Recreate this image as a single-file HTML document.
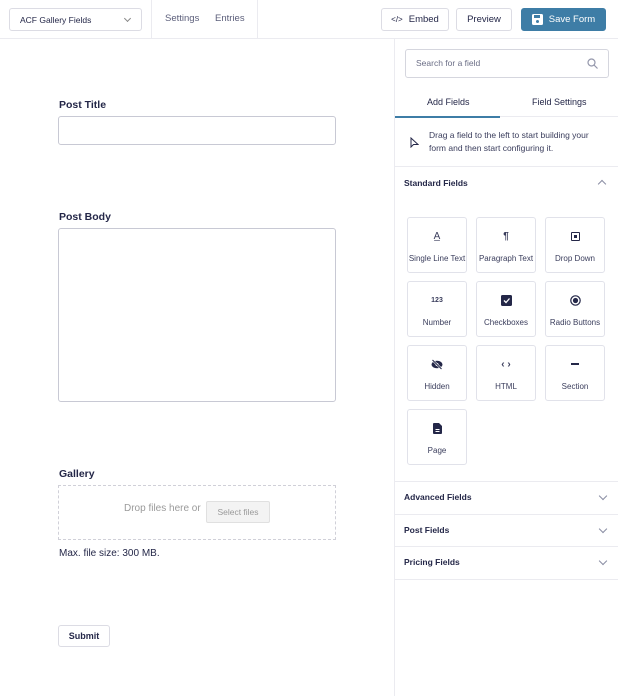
<!DOCTYPE html>
<html><head><style>
*{box-sizing:border-box;margin:0;padding:0}
body{width:618px;height:696px;background:#fff;font-family:"Liberation Sans",sans-serif;color:#242748;position:relative;overflow:hidden}
.a{position:absolute}
.btn{position:absolute;border:1px solid #dcdce4;border-radius:3px;background:#fff;font-size:9.5px;display:flex;align-items:center;justify-content:center;gap:6px;color:#242748}
.tile{position:absolute;width:60px;height:56px;border:1px solid #e1e2ea;border-radius:3px;font-size:8px;color:#3a3d5c;text-align:center}
.tile .ic{position:absolute;top:12px;left:0;right:0;height:12px;display:flex;justify-content:center;align-items:center}
.tile .lb{position:absolute;top:36px;left:0;right:0;white-space:nowrap}
.lbl{position:absolute;left:59px;font-size:10.5px;font-weight:bold;color:#242748}
.sec{position:absolute;left:395px;width:223px;height:33px;border-top:1px solid #ebebf0;font-size:8.5px;font-weight:bold;padding-left:9px;line-height:31px}
.chev{position:absolute;right:12px;top:11px;width:6px;height:6px;border-right:1.2px solid #8a8da3;border-bottom:1.2px solid #8a8da3;transform:rotate(45deg)}
</style></head><body>
<div class="a" style="left:0;top:38px;width:618px;border-top:1px solid #ebebf0"></div>
<div class="a" style="left:151px;top:0;height:38px;border-left:1px solid #ebebf0"></div>
<div class="a" style="left:257px;top:0;height:38px;border-left:1px solid #ebebf0"></div>
<div class="a" style="left:394px;top:38px;height:658px;border-left:1px solid #ebebf0"></div>
<div class="btn" style="left:9px;top:8px;width:133px;height:23px;justify-content:flex-start;padding-left:10px;font-size:8.5px">ACF Gallery Fields<span class="a" style="right:11px;top:7px;width:5px;height:5px;border-right:1px solid #888;border-bottom:1px solid #888;transform:rotate(45deg)"></span></div>
<div class="a" style="left:165px;top:13px;font-size:9.5px;color:#5b5e7a">Settings</div>
<div class="a" style="left:215px;top:13px;font-size:9.5px;color:#5b5e7a">Entries</div>
<div class="btn" style="left:381px;top:8px;width:68px;height:23px"><span style="font-size:8px">&lt;/&gt;</span>Embed</div>
<div class="btn" style="left:456px;top:8px;width:56px;height:23px">Preview</div>
<div class="btn" style="left:521px;top:8px;width:85px;height:23px;background:#3e7da6;border-color:#3e7da6;color:#fff"><svg width="11" height="11" viewBox="0 0 11 11"><rect x="0" y="0" width="11" height="11" rx="1.5" fill="#fff"/><rect x="2" y="1" width="6" height="3" fill="#3e7da6"/><circle cx="5.5" cy="7.5" r="1.5" fill="#3e7da6"/></svg>Save Form</div>

<div class="lbl" style="top:99px">Post Title</div>
<div class="a" style="left:58px;top:116px;width:278px;height:29px;border:1px solid #c8c9d4;border-radius:3px"></div>
<div class="lbl" style="top:211px">Post Body</div>
<div class="a" style="left:58px;top:228px;width:278px;height:174px;border:1px solid #c8c9d4;border-radius:3px"></div>
<div class="lbl" style="top:468px">Gallery</div>
<div class="a" style="left:58px;top:485px;width:278px;height:55px;border:1px dashed #d0d0d8"></div>
<div class="a" style="left:124px;top:503px;font-size:10px;color:#9a9a9a">Drop files here or</div>
<div class="a" style="left:206px;top:501px;width:64px;height:22px;border:1px solid #e0e0e0;background:#f3f3f3;font-size:8.5px;color:#999;text-align:center;line-height:21px;border-radius:2px">Select files</div>
<div class="a" style="left:59px;top:548px;font-size:10px;color:#242748">Max. file size: 300 MB.</div>
<div class="btn" style="left:58px;top:625px;width:52px;height:22px;font-weight:bold;font-size:9px">Submit</div>

<div class="a" style="left:405px;top:49px;width:204px;height:29px;border:1px solid #d5d6de;border-radius:3px;font-size:8.5px;color:#6b6e86;padding:8px 0 0 10px">Search for a field
<svg class="a" style="right:10px;top:8px" width="11" height="11" viewBox="0 0 11 11"><circle cx="4.5" cy="4.5" r="3.5" fill="none" stroke="#9497ab" stroke-width="1.2"/><line x1="7" y1="7" x2="10.5" y2="10.5" stroke="#9497ab" stroke-width="1.2"/></svg></div>
<div class="a" style="left:427px;top:97px;font-size:9px">Add Fields</div>
<div class="a" style="left:532px;top:97px;font-size:9px">Field Settings</div>
<div class="a" style="left:395px;top:116px;width:223px;border-top:1px solid #ebebf0"></div>
<div class="a" style="left:395px;top:116px;width:105px;border-top:2px solid #3e7da6"></div>
<svg class="a" style="left:410px;top:137px" width="9" height="11" viewBox="0 0 9 11"><path d="M1 1 L1 10 L3.5 7.5 L8 7.5 Z" fill="none" stroke="#242748" stroke-width="1"/></svg>
<div class="a" style="left:429px;top:129px;font-size:8.5px;line-height:12.5px;color:#3a3d5c;width:172px">Drag a field to the left to start building your form and then start configuring it.</div>
<div class="a" style="left:395px;top:166px;width:223px;border-top:1px solid #ebebf0"></div>
<div class="a" style="left:404px;top:178px;font-size:8.5px;font-weight:bold">Standard Fields</div>
<div class="a" style="left:599px;top:181px;width:6px;height:6px;border-left:1.2px solid #8a8da3;border-top:1.2px solid #8a8da3;transform:rotate(45deg)"></div>

<div class="tile" style="left:407px;top:217px"><div class="ic" style="font-size:10px">A̲</div><div class="lb">Single Line Text</div></div>
<div class="tile" style="left:476px;top:217px"><div class="ic" style="font-size:10px;font-weight:bold">¶</div><div class="lb">Paragraph Text</div></div>
<div class="tile" style="left:545px;top:217px"><div class="ic"><span style="width:9px;height:9px;border:1.3px solid #242748;border-radius:1px;display:flex;align-items:center;justify-content:center"><span style="width:3px;height:3px;background:#242748"></span></span></div><div class="lb">Drop Down</div></div>
<div class="tile" style="left:407px;top:281px"><div class="ic" style="font-size:7px;font-weight:bold">123</div><div class="lb">Number</div></div>
<div class="tile" style="left:476px;top:281px"><div class="ic"><svg width="11" height="11"><rect width="11" height="11" rx="1.5" fill="#242748"/><path d="M3 5.5 L5 7.5 L8.5 3.5" stroke="#fff" stroke-width="1.3" fill="none"/></svg></div><div class="lb">Checkboxes</div></div>
<div class="tile" style="left:545px;top:281px"><div class="ic"><svg width="11" height="11"><circle cx="5.5" cy="5.5" r="4.7" fill="none" stroke="#242748" stroke-width="1.2"/><circle cx="5.5" cy="5.5" r="2.6" fill="#242748"/></svg></div><div class="lb">Radio Buttons</div></div>
<div class="tile" style="left:407px;top:345px"><div class="ic"><svg width="12" height="11"><ellipse cx="6" cy="5.5" rx="5.5" ry="3.8" fill="#242748"/><circle cx="6" cy="5.5" r="1.5" fill="#fff"/><line x1="1.5" y1="1" x2="10.5" y2="10" stroke="#fff" stroke-width="2.2"/><line x1="1.5" y1="1" x2="10.5" y2="10" stroke="#242748" stroke-width="1.1"/></svg></div><div class="lb">Hidden</div></div>
<div class="tile" style="left:476px;top:345px"><div class="ic" style="font-size:10px;font-weight:bold">‹ ›</div><div class="lb">HTML</div></div>
<div class="tile" style="left:545px;top:345px"><div class="ic"><span style="width:8px;height:1.5px;background:#242748"></span></div><div class="lb">Section</div></div>
<div class="tile" style="left:407px;top:409px"><div class="ic"><svg width="9" height="11"><path d="M0 1 Q0 0 1 0 L6 0 L9 3 L9 10 Q9 11 8 11 L1 11 Q0 11 0 10 Z" fill="#242748"/><rect x="2.5" y="6" width="4" height="1" fill="#fff"/><rect x="2.5" y="8" width="4" height="1" fill="#fff"/></svg></div><div class="lb">Page</div></div>

<div class="sec" style="top:481px">Advanced Fields<span class="chev"></span></div>
<div class="sec" style="top:514px">Post Fields<span class="chev"></span></div>
<div class="sec" style="top:546px">Pricing Fields<span class="chev"></span></div>
<div class="a" style="left:395px;top:579px;width:223px;border-top:1px solid #ebebf0"></div>
</body></html>
